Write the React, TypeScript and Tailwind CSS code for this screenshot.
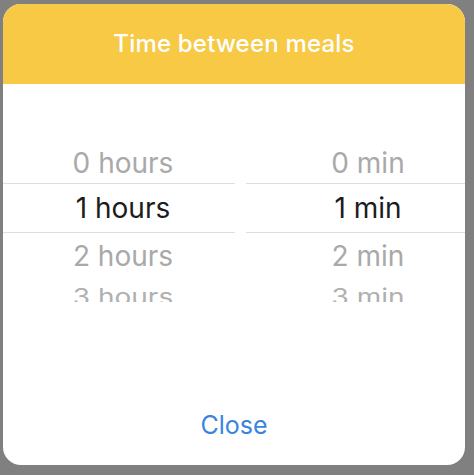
import React from "react";

const font = { fontFamily: "Inter, 'Noto Sans', 'Liberation Sans', sans-serif" };

function Column({
  items,
  className,
  padClass,
}: {
  items: string[];
  className: string;
  padClass: string;
}) {
  return (
    <div className={`flex flex-col text-[28px] ${className}`}>
      <div className={`h-[46px] flex items-center justify-center pt-[6px] text-[#a9a9a9] ${padClass}`}>
        {items[0]}
      </div>
      <div className={`h-[50px] flex items-center justify-center border-y border-[#dedede] text-[#1c1c1c] ${padClass}`}>
        {items[1]}
      </div>
      <div className={`h-[46px] flex items-center justify-center pb-[1px] text-[#a9a9a9] ${padClass}`}>
        {items[2]}
      </div>
      <div className="h-[23px] overflow-hidden">
        <div className={`h-[40px] flex items-center justify-center scale-y-[0.8] origin-top pt-[6px] text-[#b0b0b0] ${padClass}`}>
          {items[3]}
        </div>
      </div>
    </div>
  );
}

export default function App() {
  return (
    <div className="w-[474px] h-[475px] bg-[#808080] pt-[4px] pl-[3px]" style={font}>
      <div className="w-[462px] h-[461px] bg-white rounded-[18px] overflow-hidden flex flex-col">
        <div className="h-[80px] bg-[#f7c945] flex items-center justify-center">
          <span className="text-white text-[24px] font-medium tracking-[0.2px]">Time between meals</span>
        </div>
        <div className="pt-[53px] flex gap-[11px]">
          <Column
            items={["0 hours", "1 hours", "2 hours", "3 hours"]}
            className="w-[232px]"
            padClass="pl-[8px]"
          />
          <Column
            items={["0 min", "1 min", "2 min", "3 min"]}
            className="w-[219px]"
            padClass="pl-[25px]"
          />
        </div>
        <div className="flex-1 flex items-end justify-center pb-[21px]">
          <button className="text-[#3a84e0] text-[25px]">Close</button>
        </div>
      </div>
    </div>
  );
}
